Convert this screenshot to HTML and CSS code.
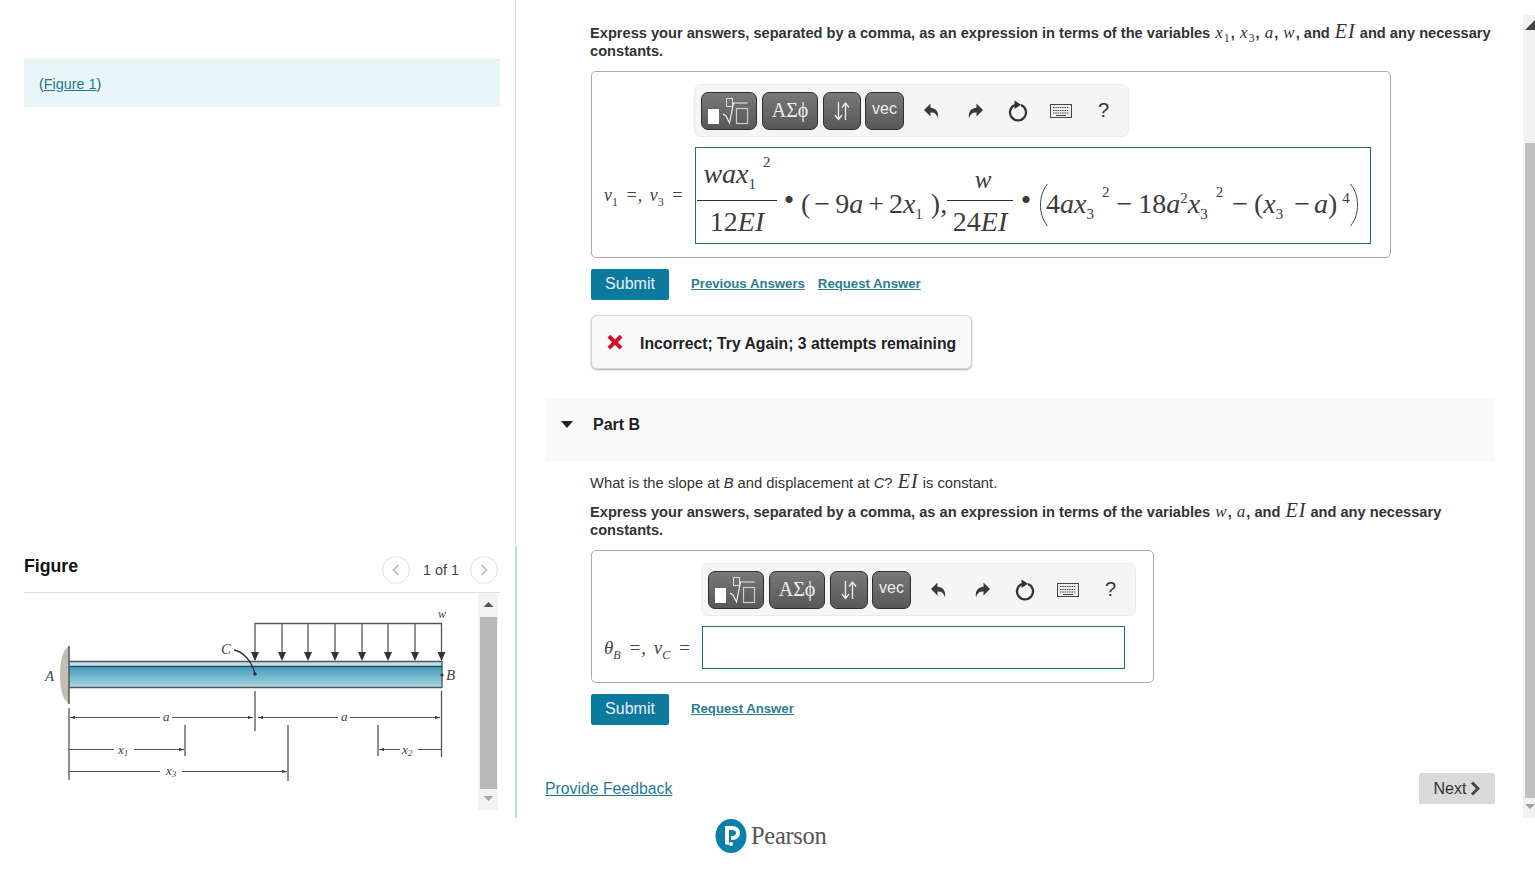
FILE: index.html
```html
<!DOCTYPE html>
<html lang="en">
<head>
<meta charset="utf-8">
<title>Part B</title>
<link rel="stylesheet" href="styles.css">
</head>
<body>
<div class="app">
  <aside class="left">
    <section class="left-top">
      <div class="figlink">(<a href="#">Figure 1</a>)</div>
    </section>
    <section class="left-bottom">
      <header class="fighead">
        <h2>Figure</h2>
        <div class="pager">
          <span class="circ"><svg width="10" height="14" viewBox="0 0 10 14"><path d="M7.500 2 2.500 7l5 5" fill="none" stroke="#c4c4c4" stroke-width="1.800"/></svg></span>
          <span class="count">1 of 1</span>
          <span class="circ"><svg width="10" height="14" viewBox="0 0 10 14"><path d="M2.500 2l5 5-5 5" fill="none" stroke="#c4c4c4" stroke-width="1.800"/></svg></span>
        </div>
      </header>
      <div class="figbody">
        <svg class="beam" width="455" height="217" viewBox="24 593 455 217">
          <defs>
            <linearGradient id="bg" x1="0" y1="0" x2="0" y2="1">
              <stop offset="0" stop-color="#2f8fb0"/>
              <stop offset="0.55" stop-color="#6db4cc"/>
              <stop offset="1" stop-color="#b5dae5"/>
            </linearGradient>
          </defs>
          <path d="M69 646C62 650 60 662 60 675s2 24 9 29z" fill="#c2bdb2"/>
          <rect x="69" y="661" width="373" height="27" fill="url(#bg)"/>
          <rect x="69" y="661" width="373" height="5" fill="#bfe0e9"/>
          <g fill="none" stroke="#555" stroke-width="1.300">
            <path d="M69 661.500H442M69 687.500H442M442 661V688"/>
            <path d="M69 666.500H442" stroke="#1d4f5f"/>
            <path d="M69 646V704" stroke-width="1.500"/>
            <path d="M255 660V623.500H441.500V660M282 623V653M308 623V653M335 623V653M362 623V653M388 623V653M415 623V653"/>
            <path d="M234 650c10 2 18 12 21 24" stroke="#333"/>
            <path d="M69 708V780M255 691V731M441.500 691V757M185 725V756M288 725V781M378 725V756"/>
            <path d="M70 717.500H160M172 717.500H253M258 717.500H338M350 717.500H440M69 749.500H114M134 749.500H184M69 771.500H160M182 771.500H287M379 749.500H400M418 749.500H441" stroke-width="1"/>
          </g>
          <g fill="#333">
            <path d="M251 652h8l-4 9zM278 652h8l-4 9zM304 652h8l-4 9zM331 652h8l-4 9zM358 652h8l-4 9zM384 652h8l-4 9zM411 652h8l-4 9zM437.500 652h8l-4 9z"/>
            <circle cx="255" cy="674" r="1.800"/>
            <circle cx="442" cy="675" r="1.600"/>
            <path d="M70 717.500l5-1.500v3zM253 717.500l-5-1.500v3zM258 717.500l5-1.500v3zM440 717.500l-5-1.500v3zM184 749.500l-5-1.500v3zM287 771.500l-5-1.500v3zM379 749.500l5-1.500v3z"/>
          </g>
          <g class="dia">
            <text x="45" y="681">A</text>
            <text x="221" y="654">C</text>
            <text x="446" y="680">B</text>
            <text x="438" y="618" font-size="12">w</text>
            <text x="163" y="721" font-size="13">a</text>
            <text x="341" y="721" font-size="13">a</text>
            <text x="118" y="754" font-size="13">x<tspan font-size="9" dy="2">1</tspan></text>
            <text x="166" y="775" font-size="13">x<tspan font-size="9" dy="2">3</tspan></text>
            <text x="402" y="754" font-size="13">x<tspan font-size="9" dy="2">2</tspan></text>
          </g>
        </svg>
        <div class="vbar">
          <svg class="sb-arrow" width="19" height="24" viewBox="0 0 19 24"><path d="M4.500 14l5-5 5 5z" fill="#555"/></svg>
          <div class="vthumb"></div>
          <svg class="sb-arrow" width="19" height="21" viewBox="0 0 19 21"><path d="M4.500 7l5 5 5-5z" fill="#a8a8a8"/></svg>
        </div>
      </div>
    </section>
  </aside>

  <main class="right">
    <p class="bold first">Express your answers, separated by a comma, as an expression in terms of the variables <i class="mv">x<sub>1</sub></i>, <i class="mv">x<sub>3</sub></i>, <i class="mv">a</i>, <i class="mv">w</i>, and <i class="mv big">EI</i> and any necessary constants.</p>

    <div class="answer a1">
      <div class="toolbar tb1">
        <span class="btn b-tpl"><svg width="44" height="28" viewBox="0 0 44 28"><rect x="1" y="12" width="11" height="15" fill="#fff"/><rect x="19.500" y="1.500" width="6" height="8" fill="none" stroke="#ddd"/><path d="M16 17l3 2 3.500 7 4-20h14" fill="none" stroke="#eee" stroke-width="1.200"/><rect x="29.500" y="11.500" width="11" height="15" fill="none" stroke="#ccc" stroke-width="1.200"/></svg></span>
        <span class="btn b-sym">ΑΣϕ</span>
        <span class="btn b-arr"><svg width="18" height="20" viewBox="0 0 18 20"><path d="M5.500 1v17M2 14l3.500 4.500L9 14M12.500 19V2M9 6.500 12.500 2 16 6.500" fill="none" stroke="#eee" stroke-width="1.300"/></svg></span>
        <span class="btn b-vec">vec</span>
        <span class="tools">
          <svg width="18" height="18" viewBox="0 0 18 18"><path d="M7.500 1.500 1 8l6.500 6.500v-4c4 0 6 1 7.500 6 1-6.500-2-10.300-7.500-10.700z" fill="#3a3a3a"/></svg>
          <svg width="18" height="18" viewBox="0 0 18 18"><path d="M10.500 1.500 17 8l-6.500 6.500v-4c-4 0-6 1-7.500 6-1-6.500 2-10.300 7.500-10.700z" fill="#3a3a3a"/></svg>
          <svg width="20" height="22" viewBox="0 0 20 22"><path d="M13 5a8 8 0 1 1-6 0" fill="none" stroke="#333" stroke-width="2.300"/><path d="M6.500 0.500v8.500l6.500-4.300z" fill="#333"/></svg>
          <svg width="22" height="14" viewBox="0 0 22 14"><rect x=".5" y=".5" width="21" height="13" fill="#eee" stroke="#444"/><path d="M3 3.500h16M3 6.500h16M3 9h16" stroke="#444" stroke-dasharray="1.500 .8"/><path d="M6 11.500h10" stroke="#444"/></svg>
          <span class="help">?</span>
        </span>
      </div>
      <div class="eqrow">
        <span class="label">v<sub>1</sub> =, v<sub>3</sub> =</span>
        <div class="eqbox">
          <span class="frac f1"><span class="num"><i>wax</i><sub class="s">1</sub><sup class="p">2</sup></span><span class="den">12<i>EI</i></span></span>
          <span class="dot">•</span>
          <span class="run r1">(<span class="op">−</span>9<i>a</i><span class="op2">+</span>2<i>x</i><sub class="s s1">1</sub>),</span>
          <span class="frac f2"><span class="num"><i>w</i></span><span class="den">24<i>EI</i></span></span>
          <span class="dot d2">•</span>
          <svg class="paren" width="10" height="44" viewBox="0 0 10 44"><path d="M8.500 1C3 8 1.500 15 1.500 22S3 36 8.500 43" fill="none" stroke="#444" stroke-width="1"/></svg>
          <span class="run r2">4<i>ax</i><sub class="s">3</sub><sup class="p p2">2</sup><span class="op3">−</span>18<i>a</i><sup class="p3">2</sup><i>x</i><sub class="s">3</sub><sup class="p p2">2</sup><span class="op4">−</span>(<i>x</i><sub class="s">3</sub><span class="op5">−</span><i>a</i>)<sup class="p3 p4">4</sup></span>
          <svg class="paren" width="10" height="44" viewBox="0 0 10 44"><path d="M1.500 1C7 8 8.500 15 8.500 22S7 36 1.500 43" fill="none" stroke="#444" stroke-width="1"/></svg>
        </div>
      </div>
    </div>

    <div class="actions a-1">
      <a class="submit" href="#">Submit</a>
      <a class="act" href="#">Previous Answers</a>
      <a class="act" href="#">Request Answer</a>
    </div>

    <div class="feedback">
      <svg width="16" height="16" viewBox="0 0 16 16"><path d="M3.300.8 8 5.400 12.700.8 15.500 3.600 10.900 8.200 15.500 12.800 12.700 15.600 8 11 3.300 15.600.5 12.800 5.100 8.200.5 3.600z" fill="#d40f2e"/></svg>
      <span>Incorrect; Try Again; 3 attempts remaining</span>
    </div>

    <div class="part">
      <svg width="12" height="7" viewBox="0 0 12 7"><path d="M0 0h12L6 7z" fill="#222"/></svg>
      <span>Part B</span>
    </div>

    <p class="reg">What is the slope at <i>B</i> and displacement at <i>C</i>? <i class="mv big">EI</i> is constant.</p>
    <p class="bold second">Express your answers, separated by a comma, as an expression in terms of the variables <i class="mv">w</i>, <i class="mv">a</i>, and <i class="mv big">EI</i> and any necessary constants.</p>

    <div class="answer a2">
      <div class="toolbar tb2">
        <span class="btn b-tpl"><svg width="44" height="28" viewBox="0 0 44 28"><rect x="1" y="12" width="11" height="15" fill="#fff"/><rect x="19.500" y="1.500" width="6" height="8" fill="none" stroke="#ddd"/><path d="M16 17l3 2 3.500 7 4-20h14" fill="none" stroke="#eee" stroke-width="1.200"/><rect x="29.500" y="11.500" width="11" height="15" fill="none" stroke="#ccc" stroke-width="1.200"/></svg></span>
        <span class="btn b-sym">ΑΣϕ</span>
        <span class="btn b-arr"><svg width="18" height="20" viewBox="0 0 18 20"><path d="M5.500 1v17M2 14l3.500 4.500L9 14M12.500 19V2M9 6.500 12.500 2 16 6.500" fill="none" stroke="#eee" stroke-width="1.300"/></svg></span>
        <span class="btn b-vec">vec</span>
        <span class="tools">
          <svg width="18" height="18" viewBox="0 0 18 18"><path d="M7.500 1.500 1 8l6.500 6.500v-4c4 0 6 1 7.500 6 1-6.500-2-10.300-7.500-10.700z" fill="#3a3a3a"/></svg>
          <svg width="18" height="18" viewBox="0 0 18 18"><path d="M10.500 1.500 17 8l-6.500 6.500v-4c-4 0-6 1-7.500 6-1-6.500 2-10.300 7.500-10.700z" fill="#3a3a3a"/></svg>
          <svg width="20" height="22" viewBox="0 0 20 22"><path d="M13 5a8 8 0 1 1-6 0" fill="none" stroke="#333" stroke-width="2.300"/><path d="M6.500 0.500v8.500l6.500-4.300z" fill="#333"/></svg>
          <svg width="22" height="14" viewBox="0 0 22 14"><rect x=".5" y=".5" width="21" height="13" fill="#eee" stroke="#444"/><path d="M3 3.500h16M3 6.500h16M3 9h16" stroke="#444" stroke-dasharray="1.500 .8"/><path d="M6 11.500h10" stroke="#444"/></svg>
          <span class="help">?</span>
        </span>
      </div>
      <div class="eqrow er2">
        <span class="label">θ<sub>B</sub> =, v<sub>C</sub> =</span>
        <div class="inputbox"></div>
      </div>
    </div>

    <div class="actions a-2">
      <a class="submit" href="#">Submit</a>
      <a class="act" href="#">Request Answer</a>
    </div>

    <div class="bottom">
      <a class="provide" href="#">Provide Feedback</a>
      <a class="next" href="#">Next <svg width="10" height="15" viewBox="0 0 10 15"><path d="M2 1.500 8 7.500 2 13.500" fill="none" stroke="#444" stroke-width="3"/></svg></a>
    </div>
  </main>

  <div class="pagebar">
    <svg width="12" height="10" viewBox="0 0 12 10"><path d="M2 10 12 0V10z" fill="#444"/></svg>
    <div class="pagethumb"></div>
    <svg width="12" height="10" viewBox="0 0 12 10"><path d="M2 1h10L7 6z" fill="#a0a0a0"/></svg>
  </div>
</div>

<footer class="foot">
  <svg width="32" height="34" viewBox="0 0 32 34"><ellipse cx="16" cy="17" rx="15.500" ry="17" fill="#0a7fa8"/><path d="M10 7h7c5 0 8 3 8 7s-3 7-8 7h-1v-4h1c2.500 0 4-1.200 4-3s-1.500-3-4-3h-3v15c-2 0-4-1-4-1z" fill="#fff"/><circle cx="16" cy="25" r="2" fill="#fff"/></svg>
  <span>Pearson</span>
</footer>
</body>
</html>
```

FILE: styles.css
```css
* { box-sizing: border-box; }
html, body { margin: 0; padding: 0; height: 877px; overflow: hidden; background: #fff; }
body { font-family: "Liberation Sans", Arial, sans-serif; font-size: 14.4px; color: #333; }
a { color: #1f7a91; }

.app { display: flex; height: 818px; }

/* left column */
.left { width: 516px; flex: none; display: flex; flex-direction: column; }
.left-top { height: 547px; padding: 59px 15px 0 24px; border-right: 1px solid #c9e0e6; }
.figlink { height: 48px; line-height: 48px; padding-left: 15px; background: #e8f6f7; border-top: 1px solid #dcefef; color: #2a5f6f; }
.left-bottom { flex: 1; padding-left: 24px; padding-right: 15px; border-right: 2px solid #c4d8de; width: 517px; }
.fighead { height: 46px; display: flex; align-items: center; justify-content: space-between; border-bottom: 1px solid #ddd; padding-bottom: 1px; }
.fighead h2 { margin: 0 0 6px; font-size: 17.700px; color: #111; }
.pager { display: flex; align-items: center; gap: 11px; margin-right: 2px; margin-top: 1px; }
.circ { width: 28px; height: 28px; border: 1px solid #e2e2e2; border-radius: 50%; display: flex; align-items: center; justify-content: center; }
.count { color: #444; margin: 1px 0 0 2px; }
.figbody { display: flex; align-items: flex-start; }
.beam { display: block; flex: none; }
.dia { font-family: "Liberation Serif", serif; font-style: italic; font-size: 15px; fill: #444; }
.vbar { width: 20px; height: 217px; flex: none; margin-left: -1px; background: #f3f3f3; display: flex; flex-direction: column; align-items: center; }
.sb-arrow { flex: none; }
.vthumb { width: 17px; flex: 1; background: #b9b9b9; }

/* right column */
.right { flex: 1; min-width: 0; padding: 24px 28px 0 29px; display: flex; flex-direction: column; color: #333; }
.right p { margin: 0; padding-left: 45px; line-height: 18px; }
.bold { font-weight: bold; font-size: 14.640px; }
.reg { font-size: 14.750px; }
.mv { font-family: "Liberation Serif", serif; font-style: italic; font-weight: normal; font-size: 17px; line-height: 0; letter-spacing: 1px; margin-left: 1px; }
.mv sub { font-size: 12px; font-style: normal; line-height: 0; }
.mv.big { font-size: 20px; line-height: 0; }

.answer { margin-left: 46px; border: 1px solid #aaa; border-radius: 5px; display: flex; flex-direction: column; }
.a1 { width: 800px; height: 187px; margin-top: 11px; padding: 12px 19px 0 12px; }
.a2 { width: 563px; height: 133px; margin-top: 11px; padding: 12px 17px 0 12px; }

.toolbar { width: 435px; height: 53px; background: #f5f5f5; border: 1px solid #ebebeb; border-radius: 7px; display: flex; align-items: center; padding-left: 6px; gap: 5px; }
.tb1 { margin-left: 90px; }
.tb2 { margin-left: 97px; }
.btn { height: 38px; border: 1px solid #2e2e2e; border-radius: 7px; background: linear-gradient(#787878, #585858); color: #eee; display: flex; align-items: center; justify-content: center; flex: none; }
.b-tpl { width: 56px; }
.b-sym { width: 56px; font-family: "Liberation Serif", serif; font-size: 20px; }
.b-arr { width: 38px; }
.b-vec { width: 39px; margin-left: -1px; font-size: 16px; padding-bottom: 3px; }
.tools { display: grid; grid-template-columns: repeat(5, 43px); justify-items: center; align-items: center; margin-left: 1px; }
.help { font-size: 20px; color: #333; }

.eqrow { display: flex; align-items: center; margin-top: 10px; }
.label { width: 91px; flex: none; font-family: "Liberation Serif", serif; font-style: italic; font-size: 18px; white-space: nowrap; color: #444; word-spacing: 3px; }
.er2 .label { width: 98px; font-size: 19px; }
.label sub { font-size: 12px; font-style: normal; line-height: 0; }
.er2 .label sub { font-style: italic; }
.eqbox { width: 676px; height: 97px; flex: none; border: 1px solid #2a6a7a; display: flex; align-items: center; padding-left: 1px; font-family: "Liberation Serif", serif; font-size: 28px; color: #3c3c3c; white-space: nowrap; }
.inputbox { width: 423px; height: 43px; flex: none; border: 1px solid #1f6f80; }

.frac { display: inline-flex; flex-direction: column; align-items: center; flex: none; }
.f1 { width: 80px; }
.f2 { width: 66px; }
.num { height: 53px; width: 100%; border-bottom: 1px solid #333; text-align: center; line-height: 52px; white-space: nowrap; }
.f2 .num { line-height: 62px; padding-left: 6px; }
.f2 .num i { font-size: 25px; }
.den { height: 43px; line-height: 42px; }
.s { font-size: 15px; vertical-align: -6px; line-height: 0; }
.s1 { margin-right: 8px; }
.p { font-size: 15px; vertical-align: 16px; line-height: 0; margin-left: 7px; }
.p2 { margin-left: 8px; }
.p3 { font-size: 15px; vertical-align: 10px; line-height: 0; }
.p4 { margin-left: 5px; }
.dot { width: 24px; text-align: center; flex: none; font-size: 30px; margin-top: 8px; }
.d2 { width: 26px; }
.run { padding-top: 17px; flex: none; }
.r1 { width: 146px; }
.r2 { width: 303px; margin-left: -3px; }
.op { margin: 0 5px 0 4px; }
.op2 { margin: 0 5px; }
.op3 { margin: 0 6px 0 7px; }
.op4 { margin: 0 6px 0 9px; }
.op5 { margin: 0 4px 0 11px; }
.paren { flex: none; margin-top: 18px; }

.actions { display: flex; align-items: center; margin-left: 46px; gap: 13px; }
.a-1 { margin-top: 11px; }
.a-2 { margin-top: 11px; }
.submit { width: 78px; height: 31px; margin-right: 9px; background: #0b7a9c; color: #eef; border-radius: 2px; text-align: center; line-height: 29px; text-decoration: none; font-size: 16px; }
.act { font-size: 13.200px; font-weight: bold; color: #2b7c91; padding-bottom: 2px; }

.feedback { margin: 15px 0 0 46px; width: 381px; height: 54px; background: #f9f9f9; border: 1px solid #d4d4d4; border-radius: 6px; box-shadow: 0 1px 2px #aaa; display: flex; align-items: center; padding-left: 15px; gap: 17px; }
.feedback span { font-size: 15.750px; font-weight: bold; color: #222; padding-top: 3px; }

.part { margin-top: 30px; height: 63px; background: #f9f9f9; display: flex; align-items: center; padding: 0 0 12px 16px; gap: 20px; font-size: 16px; font-weight: bold; color: #222; }

.reg { margin-top: 12px !important; }
.second { margin-top: 11px !important; }

.bottom { margin-top: 48px; display: flex; align-items: center; justify-content: space-between; }
.provide { font-size: 15.800px; color: #1f7a91; }
.next { width: 76px; height: 31px; background: #d9d9d9; border-radius: 2px; font-size: 16px; color: #333; text-decoration: none; display: flex; align-items: center; justify-content: center; gap: 4px; }

/* page scrollbar */
.pagebar { width: 12px; flex: none; margin-top: 15px; background: #f1f1f1; display: flex; flex-direction: column; align-items: flex-end; padding-top: 5px; }
.pagethumb { width: 10px; height: 655px; margin: 113px 0 5px; background: #c1c1c1; align-self: flex-end; }

/* footer */
.foot { display: flex; align-items: center; gap: 4px; margin: 0 0 0 715px; height: 36px; }
.foot span { font-family: "Liberation Serif", serif; font-size: 24.500px; color: #555; letter-spacing: -0.300px; }
```
